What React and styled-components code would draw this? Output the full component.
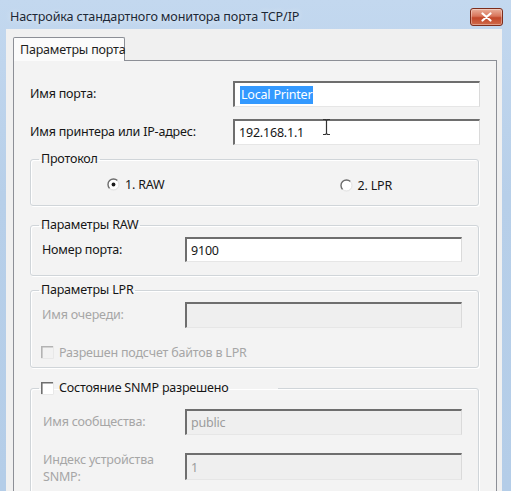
import React from "react";
import styled, { createGlobalStyle } from "styled-components";

const Global = createGlobalStyle`
  html, body { margin: 0; padding: 0; }
  body {
    width: 511px; height: 491px; overflow: hidden;
    font-family: "Noto Sans", "Open Sans", sans-serif;
    background: #b9d1ea;
  }
`;

const Window = styled.div`
  width: 511px;
  height: 491px;
  box-sizing: border-box;
  display: flex;
  flex-direction: column;
  padding: 0 9px 0 6px;
  background: linear-gradient(180deg, #c3d8ef 0%, #b7cfe9 40%, #b4cde8 100%);
  overflow: hidden;
`;

const TitleBar = styled.div`
  height: 29px;
  flex: none;
  display: flex;
  align-items: center;
  justify-content: space-between;
  padding-left: 4px;
`;

const Title = styled.div`
  font-size: 12.6px;
  letter-spacing: -0.15px;
  color: #1c2836;
  white-space: nowrap;
  text-shadow: 0 0 6px rgba(255, 255, 255, 0.7);
  margin-top: 3px;
`;

const CloseButton = styled.div`
  width: 33px;
  height: 18px;
  box-sizing: border-box;
  margin-right: -1px;
  margin-top: 5px;
  border: 1px solid #7d2d1c;
  border-radius: 3px;
  background: linear-gradient(180deg, #eab09c 0%, #d8745a 45%, #c2472a 55%, #d06a4a 100%);
  display: flex;
  align-items: center;
  justify-content: center;
  box-shadow: inset 0 0 0 1px rgba(255, 255, 255, 0.35);
`;

const Client = styled.div`
  flex: 1;
  background: #f0f0f0;
  padding: 8px 5px 0 7px;
  display: flex;
  flex-direction: column;
  min-height: 0;
`;

const TabStrip = styled.div`
  display: flex;
  height: 23px;
  flex: none;
`;

const Tab = styled.div`
  width: 112px;
  box-sizing: border-box;
  height: 24px;
  margin-bottom: -1px;
  border: 1px solid #8c8f96;
  border-bottom: none;
  border-radius: 2px 2px 0 0;
  background: #fbfbfb;
  font-size: 12.5px;
  letter-spacing: -0.2px;
  white-space: nowrap;
  color: #1e1e1e;
  display: flex;
  align-items: center;
  padding-left: 6px;
  position: relative;
  z-index: 1;
`;

const Panel = styled.div`
  flex: 1;
  border: 1px solid #8c8f96;
  border-bottom: none;
  background: #f3f3f3;
  padding: 20px 16px 0 16px;
  display: flex;
  flex-direction: column;
  font-size: 12.5px;
  letter-spacing: -0.2px;
`;

const TopRow = styled.div`
  display: grid;
  grid-template-columns: 203px 1fr;
  align-items: center;
  margin-bottom: ${p => p.$mb || 0}px;
`;

const Label = styled.div`
  line-height: ${p => p.$lh || 18}px;
  white-space: nowrap;
  color: ${p => (p.$disabled ? "#a6a6a6" : "#161616")};
  padding-left: ${p => p.$indent || 0}px;
  margin-top: ${p => p.$mt || 0}px;
`;

const Field = styled.div`
  position: relative;
  height: ${p => p.$h || 26}px;
  box-sizing: border-box;
  border-top: 2px solid #6e6e6e;
  border-left: 2px solid #6e6e6e;
  border-right: 1px solid #dadada;
  border-bottom: 1px solid #e6e6e6;
  background: ${p => (p.$disabled ? "#efefef" : "#ffffff")};
  color: ${p => (p.$disabled ? "#9c9c9c" : "#161616")};
  display: flex;
  align-items: center;
  padding-left: ${p => p.$pl || 4}px;
`;

const Selected = styled.span`
  background: #3399ff;
  color: #fff;
  padding: 0 1px;
  line-height: 18px;
`;

const Cursor = styled.svg`
  position: absolute;
  left: 87px;
  top: -3px;
`;

const Group = styled.fieldset`
  margin: ${p => p.$mt || 0}px 1px 0 0;
  padding: ${p => p.$pt || 0}px 16px ${p => p.$pb || 0}px 10px;
  border: 1px solid #d0d5d9;
  border-radius: 3px;
  box-shadow: 1px 1px 0 #ffffff, inset 1px 1px 0 #ffffff;
  min-inline-size: 0;
  display: flex;
  flex-direction: column;
`;

const Legend = styled.legend`
  padding: 0 ${p => p.$pr || 2}px 0 2px;
  margin-left: -2px;
  line-height: 18px;
  white-space: nowrap;
  color: #161616;
  display: flex;
  align-items: center;
  gap: 5px;
`;

const RadioRow = styled.div`
  display: flex;
  justify-content: space-between;
  padding: 0 70px 0 66px;
  height: 18px;
  align-items: center;
`;

const Choice = styled.div`
  display: flex;
  align-items: center;
  gap: 5px;
  white-space: nowrap;
  color: #161616;
  margin-top: ${p => p.$mt || 0}px;
`;

const GroupRow = styled.div`
  display: grid;
  grid-template-columns: 144px 1fr;
  align-items: center;
  margin-top: ${p => p.$mt || 0}px;
`;

const CheckRow = styled.div`
  display: flex;
  align-items: center;
  gap: 5px;
  height: 18px;
  white-space: nowrap;
  margin-top: ${p => p.$mt || 0}px;
  color: ${p => (p.$disabled ? "#a6a6a6" : "#161616")};
`;

function Radio({ checked }) {
  return (
    <svg width="13" height="13" viewBox="0 0 13 13">
      <circle cx="6.5" cy="6.5" r="5" fill="#ffffff" />
      <path d="M10.4 2.6 A5.5 5.5 0 0 0 2.6 10.4" stroke="#6d6d6d" strokeWidth="1.4" fill="none" />
      <path d="M2.6 10.4 A5.5 5.5 0 0 0 10.4 2.6" stroke="#e2e2e2" strokeWidth="1" fill="none" />
      {checked && <circle cx="6.5" cy="6.5" r="1.9" fill="#1c1c1c" />}
    </svg>
  );
}

function CheckBox({ disabled }) {
  const dark = disabled ? "#b3b3b3" : "#6f6f6f";
  return (
    <svg width="13" height="13" viewBox="0 0 13 13">
      <rect x="0" y="0" width="13" height="13" fill={disabled ? "#f2f2f2" : "#ffffff"} />
      <path d="M0.8 13 V0.8 H13" stroke={dark} strokeWidth="1.6" fill="none" />
      <path d="M0 12.5 H12.5 V0" stroke="#e8e8e8" strokeWidth="1" fill="none" />
    </svg>
  );
}

export default function App() {
  return (
    <>
      <Global />
      <Window>
        <TitleBar>
          <Title>Настройка стандартного монитора порта TCP/IP</Title>
          <CloseButton>
            <svg width="11" height="10" viewBox="0 0 11 10">
              <path d="M1.5 1.5 L9.5 8.5 M9.5 1.5 L1.5 8.5" stroke="#ffffff" strokeWidth="2.2" strokeLinecap="round" />
            </svg>
          </CloseButton>
        </TitleBar>
        <Client>
          <TabStrip>
            <Tab>Параметры порта</Tab>
          </TabStrip>
          <Panel>
            <TopRow $mb={12}>
              <Label>Имя порта:</Label>
              <Field $pl={5}>
                <Selected>Local Printer</Selected>
              </Field>
            </TopRow>
            <TopRow>
              <Label>Имя принтера или IP-адрес:</Label>
              <Field $pl={4}>
                192.168.1.1
                <Cursor width="9" height="18" viewBox="0 0 9 18">
                  <path d="M1 1.5 H3.5 L4.5 2.5 L5.5 1.5 H8 M4.5 2.5 V15.5 M1 16.5 H3.5 L4.5 15.5 L5.5 16.5 H8" stroke="#333" strokeWidth="1.2" fill="none" />
                </Cursor>
              </Field>
            </TopRow>

            <Group $mt={5} $pt={7} $pb={12}>
              <Legend>Протокол</Legend>
              <RadioRow>
                <Choice>
                  <Radio checked /> 1. RAW
                </Choice>
                <Choice $mt={3}>
                  <Radio /> 2. LPR
                </Choice>
              </RadioRow>
            </Group>

            <Group $mt={10} $pt={3} $pb={13}>
              <Legend>Параметры RAW</Legend>
              <GroupRow>
                <Label $indent={1}>Номер порта:</Label>
                <Field $h={25}>9100</Field>
              </GroupRow>
            </Group>

            <Group $mt={5} $pt={3} $pb={6}>
              <Legend>Параметры LPR</Legend>
              <GroupRow>
                <Label $indent={1} $disabled>Имя очереди:</Label>
                <Field $disabled />
              </GroupRow>
              <CheckRow $disabled $mt={15}>
                <CheckBox disabled /> Разрешен подсчет байтов в LPR
              </CheckRow>
            </Group>

            <Group $mt={11} $pt={12} $pb={10}>
              <Legend $pr={50}>
                <CheckBox /> Состояние SNMP разрешено
              </Legend>
              <GroupRow>
                <Label $indent={2} $disabled>Имя сообщества:</Label>
                <Field $disabled>public</Field>
              </GroupRow>
              <GroupRow $mt={13}>
                <Label $indent={2} $disabled $lh={17} $mt={3}>
                  Индекс устройства
                  <br />
                  SNMP:
                </Label>
                <Field $disabled $h={27}>1</Field>
              </GroupRow>
            </Group>
          </Panel>
        </Client>
      </Window>
    </>
  );
}
